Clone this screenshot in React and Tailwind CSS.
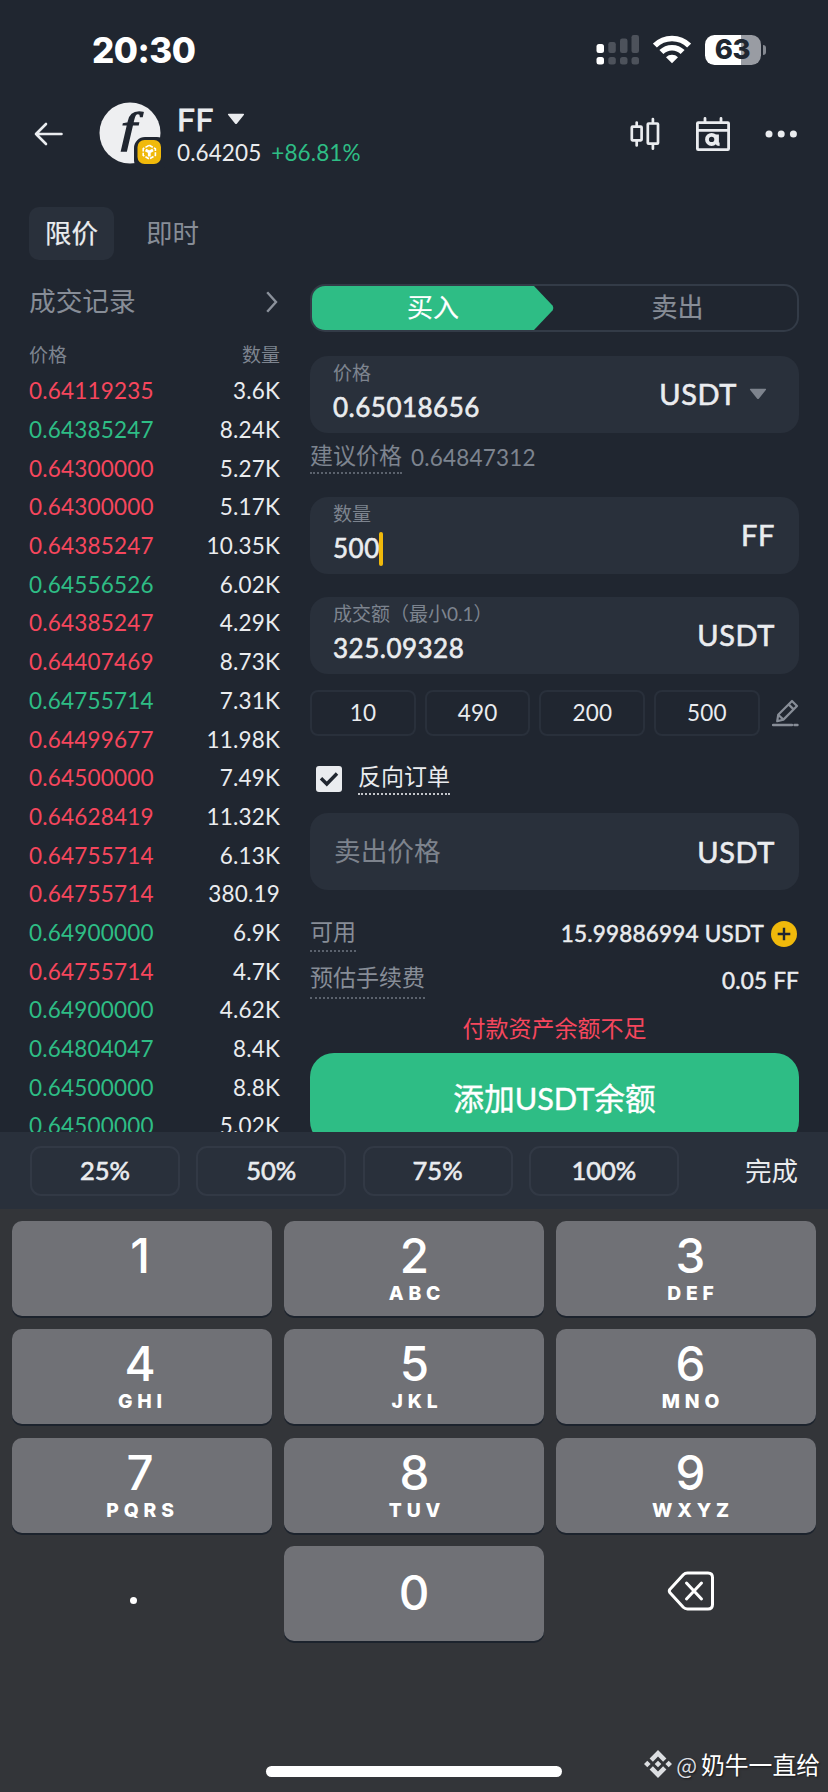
import React from "react";

const trades = [
  ["0.64119235", "3.6K", 0],
  ["0.64385247", "8.24K", 1],
  ["0.64300000", "5.27K", 0],
  ["0.64300000", "5.17K", 0],
  ["0.64385247", "10.35K", 0],
  ["0.64556526", "6.02K", 1],
  ["0.64385247", "4.29K", 0],
  ["0.64407469", "8.73K", 0],
  ["0.64755714", "7.31K", 1],
  ["0.64499677", "11.98K", 0],
  ["0.64500000", "7.49K", 0],
  ["0.64628419", "11.32K", 0],
  ["0.64755714", "6.13K", 0],
  ["0.64755714", "380.19", 0],
  ["0.64900000", "6.9K", 1],
  ["0.64755714", "4.7K", 0],
  ["0.64900000", "4.62K", 1],
  ["0.64804047", "8.4K", 1],
  ["0.64500000", "8.8K", 1],
  ["0.64500000", "5.02K", 1],
];

const keyRows = [
  [["1", ""], ["2", "ABC"], ["3", "DEF"]],
  [["4", "GHI"], ["5", "JKL"], ["6", "MNO"]],
  [["7", "PQRS"], ["8", "TUV"], ["9", "WXYZ"]],
];

// Horizontal nudge of the glyphs in each keypad column.
const columnShift = ["pr-[4px]", "pl-[1px]", "pl-[9px]"];

function StatusBar() {
  return (
    <div className="flex h-[100px] shrink-0 items-center justify-between pl-[92px] pr-[62px] font-['Inter',sans-serif]">
      <span className="text-[35px] font-extrabold leading-none tracking-[-0.5px] text-white">20:30</span>
      <div className="flex h-[30px] items-center">
        <svg width="44" height="30" viewBox="0 0 44 30">
          <g fill="#fff">
            <rect x="0.5" y="9" width="7.5" height="9" rx="2.5" />
            <rect x="0.5" y="22" width="7.5" height="7.5" rx="2.5" />
          </g>
          <g fill="#4d525b">
            <rect x="12.3" y="7" width="7.5" height="11" rx="2.2" />
            <rect x="12.3" y="22" width="7.5" height="7.5" rx="2.5" />
            <rect x="24" y="3.5" width="7.5" height="14.5" rx="2.2" />
            <rect x="24" y="22" width="7.5" height="7.5" rx="2.5" />
            <rect x="35.5" y="0" width="7.5" height="18" rx="2.2" />
            <rect x="35.5" y="22" width="7.5" height="7.5" rx="2.5" />
          </g>
        </svg>
        <svg className="ml-[13px]" width="38" height="30" viewBox="0 0 38 30">
          <g fill="none" stroke="#fff" strokeWidth="5.6">
            <path d="M1.9 10.6 A24.2 24.2 0 0 1 36.1 10.6" />
            <path d="M8.4 17.1 A15 15 0 0 1 29.6 17.1" />
          </g>
          <path d="M19 28.2 L13 22.2 A8.5 8.5 0 0 1 25 22.2 Z" fill="#fff" />
        </svg>
        <div className="ml-[14px] flex items-center">
          <div className="flex h-[30px] w-[56px] items-center justify-center rounded-[9.5px] bg-[linear-gradient(90deg,#fff_64%,#999ca3_64%)] text-[27.5px] font-extrabold leading-none tracking-[-0.5px] text-[#202630]">
            63
          </div>
          <div className="ml-[2px] h-[10px] w-[3.5px] rounded-r-full bg-[#858991]" />
        </div>
      </div>
    </div>
  );
}

function TokenLogo() {
  return (
    <svg width="66" height="66" viewBox="0 0 66 66">
      <circle cx="31" cy="31" r="30.5" fill="#eeeff1" />
      <text
        transform="translate(22 39.8) scale(1.3 1)"
        fill="#202630"
        stroke="#202630"
        strokeWidth="1.3"
        fontSize="43"
        fontStyle="italic"
        fontFamily="'Liberation Serif', serif"
      >
        f
      </text>
      <rect x="35" y="35" width="34" height="34" rx="11" fill="#202630" />
      <rect x="38.5" y="38" width="23.5" height="24" rx="7" fill="#f0b90b" />
      <g fill="none" stroke="#fff" strokeLinejoin="round">
        <path d="M50.3 43.2 L56.4 46.7 V53.4 L50.3 56.9 L44.2 53.4 V46.7 Z" strokeWidth="1.6" strokeDasharray="4 1.3" />
        <path d="M46.6 48 L50.3 50 L54 48 M50.3 50 V54.4" strokeWidth="2.8" />
      </g>
    </svg>
  );
}

function Header() {
  return (
    <div className="flex h-[68px] shrink-0 items-center pl-[34px] pr-[31px]">
      <svg width="30" height="24" viewBox="0 0 30 24" fill="none" stroke="#eaecef" strokeWidth="2.6" strokeLinecap="round" strokeLinejoin="round">
        <path d="M27.5 12 H2 M12 2 L2 12 L12 22" />
      </svg>
      <div className="ml-[35px] h-[66px] w-[66px] pt-px">
        <TokenLogo />
      </div>
      <div className="ml-[12px] flex flex-col">
        <div className="flex h-[36px] items-center">
          <span className="text-[31.5px] leading-[36px] tracking-[0.8px] text-[#eaecef] [-webkit-text-stroke:0.9px_#eaecef]">FF</span>
          <svg className="ml-[13px]" width="18" height="12" viewBox="0 0 18 12">
            <path d="M1.5 0.7 H16.5 Q17.6 1 16.8 2 L10 10.6 Q9 11.6 8 10.6 L1.2 2 Q0.4 1 1.5 0.7 Z" fill="#eaecef" />
          </svg>
        </div>
        <div className="flex h-[30px] items-center gap-[10px] pt-[2px] text-[22.5px] leading-[30px] tracking-[0.1px]">
          <span className="text-[#eaecef]">0.64205</span>
          <span className="text-[#2ebd85]">+86.81%</span>
        </div>
      </div>
      <div className="ml-auto flex items-center">
        <svg width="30" height="34" viewBox="0 0 30 34" fill="none" stroke="#eaecef" strokeWidth="2.7" strokeLinecap="round">
          <rect x="1.8" y="9.7" width="9.8" height="13.6" rx="0.8" />
          <path d="M6.7 5.5 V9 M6.7 24 V28.5" />
          <rect x="17.8" y="6.5" width="10.2" height="20.2" rx="0.8" />
          <path d="M22.9 2 V6 M22.9 27.5 V31.7" />
        </svg>
        <svg className="ml-[35px]" width="36" height="36" viewBox="0 0 36 36" fill="none" stroke="#eaecef" strokeWidth="2.8" strokeLinecap="round">
          <rect x="2.4" y="6.6" width="31.2" height="27" rx="0.8" />
          <path d="M2.4 14.4 H33.6 M10 2.4 V6 M26 2.4 V6" />
          <circle cx="16.6" cy="23.4" r="4.6" strokeWidth="3.8" />
          <path d="M22.2 18.4 V26.4 Q22.2 28.2 24.6 28.2" strokeWidth="3.4" strokeLinecap="butt" />
        </svg>
        <svg className="ml-[34px]" width="32" height="8" viewBox="0 0 32 8" fill="#eaecef">
          <circle cx="4" cy="4" r="3.5" />
          <circle cx="16.2" cy="4" r="3.5" />
          <circle cx="28.4" cy="4" r="3.5" />
        </svg>
      </div>
    </div>
  );
}

function TradeList() {
  return (
    <div className="flex w-[250px] shrink-0 flex-col">
      <div className="flex h-[36px] shrink-0 items-center justify-between text-[#848e9c]">
        <span className="-ml-px -mt-[2px] text-[26.7px] leading-[36px] text-[#878d97]">成交记录</span>
        <svg className="mr-[2px]" width="12" height="22" viewBox="0 0 12 22" fill="none" stroke="#8b919b" strokeWidth="2.4">
          <path d="M1.2 1.2 L10 11 L1.2 20.8" />
        </svg>
      </div>
      <div className="mt-[22px] flex h-[26px] shrink-0 items-center justify-between text-[19px] leading-[26px] text-[#7d848f]">
        <span className="-ml-px">价格</span>
        <span>数量</span>
      </div>
      <div className="mt-[4px] flex shrink-0 flex-col">
        {trades.map(([price, amount, up], i) => (
          <div key={i} className="-ml-px flex h-[38.7px] shrink-0 items-center justify-between text-[22.5px] leading-[30px] tracking-[0.2px]">
            <span className={up ? "text-[#2ebd85]" : "text-[#f6465d]"}>{price}</span>
            <span className="text-[#eaecef]">{amount}</span>
          </div>
        ))}
      </div>
    </div>
  );
}

function Field({ label, value, unit, caret, cursor }) {
  return (
    <div className="flex h-[77px] shrink-0 items-center justify-between rounded-[18px] bg-[#29303b] pl-[23px] pr-[24px]">
      <div className="flex h-[77px] flex-col">
        <span className="mt-[4px] h-[25px] text-[19px] leading-[25px] text-[#7d848f]">{label}</span>
        <span className="mt-[4px] flex h-[36px] items-center text-[26px] leading-[36px] tracking-[0.5px] text-[#eaecef] [-webkit-text-stroke:0.6px_#eaecef]">
          {value}
          {cursor && <i className="-ml-px mt-[2px] h-[34px] w-[4px] rounded-sm bg-[#f0b90b]" />}
        </span>
      </div>
      <div className="flex items-center pb-[2px]">
        <span className="text-[29px] leading-[36px] tracking-[0.6px] text-[#eaecef] [-webkit-text-stroke:0.6px_#eaecef]">{unit}</span>
        {caret && (
          <svg className="ml-[12px] mr-[8px]" width="18" height="12" viewBox="0 0 18 12">
            <path d="M1.5 0.7 H16.5 Q17.6 1 16.8 2 L10 10.6 Q9 11.6 8 10.6 L1.2 2 Q0.4 1 1.5 0.7 Z" fill="#7d838d" />
          </svg>
        )}
      </div>
    </div>
  );
}

function OrderForm() {
  return (
    <div className="ml-[30px] flex w-[489px] shrink-0 flex-col">
      <div className="flex h-[48px] shrink-0 overflow-hidden rounded-[15px] border-2 border-[#333b47] text-[26px] leading-[36px]">
        <div className="relative flex h-full w-[242px] items-center justify-center">
          <svg className="absolute inset-0" width="242" height="44" viewBox="0 0 242 44">
            <path d="M0 0 H222 L240.5 19.6 Q242 22 240.5 24.4 L222 44 H0 Z" fill="#2ebd85" />
          </svg>
          <span className="relative mb-[3px] text-white [-webkit-text-stroke:0.2px_#fff]">买入</span>
        </div>
        <div className="flex h-full flex-1 items-center justify-center pb-[3px] pl-[4px] text-[#878d97] [-webkit-text-stroke:0.2px_#878d97]">卖出</div>
      </div>
      <div className="h-[24px] shrink-0" />
      <Field label="价格" value="0.65018656" unit="USDT" caret />
      <div className="mt-[7px] flex h-[57px] shrink-0 items-start gap-[9px] text-[23px] leading-[31px] text-[#7d848f]">
        <span className="h-[34px] border-b-2 border-dotted border-[#5b626d]">建议价格</span>
        <span className="mt-[2px] text-[22.5px] tracking-[0.2px]">0.64847312</span>
      </div>
      <Field label="数量" value="500" unit="FF" cursor />
      <div className="h-[23px] shrink-0" />
      <Field label="成交额（最小0.1）" value="325.09328" unit="USDT" />
      <div className="mt-[16px] flex h-[46px] shrink-0 items-center gap-[8.9px]">
        {["10", "490", "200", "500"].map((v) => (
          <div key={v} className="flex h-[46px] w-[105.8px] items-center justify-center rounded-[8px] border-2 border-[#29303b] text-[22.5px] tracking-[0.2px] text-[#eaecef]">
            {v}
          </div>
        ))}
        <svg className="ml-[3px]" width="27" height="28" viewBox="0 0 27 28" fill="none" stroke="#878d97" strokeWidth="2.2" strokeLinejoin="round">
          <path d="M5.2 22.2 L6.2 15.8 L20 2 L25 7 L11.4 20.6 Z M16.6 5.4 L21.6 10.4 M6.2 15.8 L11.4 20.6" />
          <path d="M1 26 H20 M22.5 26 H25.5" strokeWidth="2.4" strokeLinecap="round" />
        </svg>
      </div>
      <div className="mt-[24px] flex h-[53px] shrink-0 items-start">
        <div className="ml-[6px] mt-[6px] flex h-[26px] w-[26px] items-center justify-center rounded-[3px] bg-[#eaecef]">
          <svg width="20" height="16" viewBox="0 0 20 16" fill="none" stroke="#202630" strokeWidth="3.4">
            <path d="M2 7.2 L7.8 13 L18 2.5" />
          </svg>
        </div>
        <span className="ml-[16px] h-[35px] border-b-2 border-dotted border-[#c3c6cb] text-[23px] leading-[32px] text-[#eaecef]">反向订单</span>
      </div>
      <div className="flex h-[77px] shrink-0 items-center justify-between rounded-[18px] bg-[#29303b] pl-[24px] pr-[24px]">
        <span className="text-[26.7px] text-[#7d838d]">卖出价格</span>
        <span className="text-[29px] tracking-[0.6px] text-[#eaecef] [-webkit-text-stroke:0.6px_#eaecef]">USDT</span>
      </div>
      <div className="mt-[26px] flex h-[46px] shrink-0 items-start justify-between text-[23px] leading-[30px]">
        <span className="h-[36px] border-b-2 border-dotted border-[#5b626d] text-[#878d97]">可用</span>
        <div className="mt-[3px] flex items-center">
          <span className="text-[22.5px] tracking-[0.2px] text-[#eaecef] [-webkit-text-stroke:0.5px_#eaecef]">15.99886994 USDT</span>
          <svg className="ml-[7px] mr-[2px]" width="26" height="26" viewBox="0 0 26 26">
            <circle cx="13" cy="13" r="13" fill="#f0b90b" />
            <path d="M6.7 13 H19.3 M13 6.7 V19.3" stroke="#202630" strokeWidth="2.4" />
          </svg>
        </div>
      </div>
      <div className="flex h-[49px] shrink-0 items-start justify-between text-[23px] leading-[31px]">
        <span className="h-[37px] border-b-2 border-dotted border-[#5b626d] text-[#878d97]">预估手续费</span>
        <span className="mt-[3px] text-[22.5px] tracking-[0.2px] text-[#eaecef] [-webkit-text-stroke:0.5px_#eaecef]">0.05 FF</span>
      </div>
      <div className="flex h-[42px] shrink-0 justify-center text-[23px] leading-[34px] text-[#f6465d]">付款资产余额不足</div>
      <div className="flex h-[92px] shrink-0 items-center justify-center rounded-[24px] bg-[#2ebd85] text-[30.7px] text-white [-webkit-text-stroke:0.4px_#fff]">
        添加USDT余额
      </div>
    </div>
  );
}

function Keypad() {
  return (
    <div className="flex flex-1 flex-col bg-[#333539] px-[12px] pt-[12px] font-['Inter',sans-serif] text-white">
      <div className="grid grid-cols-3 gap-x-[12px] gap-y-[13.3px]">
        {keyRows.map((row) =>
          row.map(([n, letters], col) => (
            <div key={n} className={`flex h-[95px] flex-col items-center rounded-[10px] bg-[#707176] shadow-[0_2px_0_#1c232d] ${columnShift[col]}`}>
              <span className="mt-[11px] text-[47.5px] font-medium leading-[48px]">{n}</span>
              <span className="mt-[2px] h-[22px] pl-[5px] text-[19.3px] font-extrabold leading-[22px] tracking-[4.8px]">{letters}</span>
            </div>
          ))
        )}
        <div className="flex h-[95px] items-center justify-center">
          <div className="mr-[17px] mt-[15px] h-[7px] w-[7px] rounded-full bg-white" />
        </div>
        <div className="flex h-[95px] items-center justify-center rounded-[10px] bg-[#707176] text-[47.5px] font-medium leading-[48px] shadow-[0_2px_0_#1c232d]">0</div>
        <div className="flex h-[95px] items-center justify-center">
          <svg className="ml-[10px] mt-[-5px]" width="48" height="40" viewBox="0 0 48 40" fill="none" stroke="#fff" strokeWidth="3" strokeLinecap="round" strokeLinejoin="round">
            <path d="M20.5 2 H41 Q45.5 2 45.5 6.5 V33.5 Q45.5 38 41 38 H20.5 Q18 38 16.3 36.3 L3 21.8 Q1.6 20 3 18.2 L16.3 3.7 Q18 2 20.5 2 Z" />
            <path d="M19.5 12 L34.5 28 M34.5 12 L19.5 28" />
          </svg>
        </div>
      </div>
      <div className="relative mt-[125px] flex h-[11px] justify-center">
        <div className="h-[11px] w-[296px] rounded-full bg-white" />
        <div className="absolute right-[-4px] top-[-19px] flex h-[34px] items-center font-['Noto_Sans_CJK_SC',sans-serif] [text-shadow:1px_1px_2px_#0008]">
          <svg width="28" height="28" viewBox="0 0 28 28" fill="#dcdee1">
            <path d="M14 0 L22.4 8.4 L19.1 11.7 L14 6.6 L8.9 11.7 L5.6 8.4 Z" />
            <path d="M14 28 L22.4 19.6 L19.1 16.3 L14 21.4 L8.9 16.3 L5.6 19.6 Z" />
            <path d="M3.3 10.7 L6.6 14 L3.3 17.3 L0 14 Z M24.7 10.7 L28 14 L24.7 17.3 L21.4 14 Z M14 10.7 L17.3 14 L14 17.3 L10.7 14 Z" />
          </svg>
          <span className="ml-[4px] text-[22px] leading-[34px] text-[#dcdee1]">@</span>
          <span className="ml-[4px] text-[23.8px] leading-[34px]">奶牛一直给</span>
        </div>
      </div>
    </div>
  );
}

export default function App() {
  return (
    <div className="flex h-[1792px] w-[828px] flex-col overflow-hidden bg-[#202630] font-['Lato','Noto_Sans_CJK_SC',sans-serif]">
      <StatusBar />
      <Header />
      <div className="mt-[39px] flex h-[53px] shrink-0 pl-[29px] text-[26.5px] leading-[53px]">
        <div className="w-[85px] rounded-[10px] bg-[#29303b] text-center text-[#eaecef] [-webkit-text-stroke:0.2px_#eaecef]">限价</div>
        <div className="ml-[32px] text-[#878d97]">即时</div>
      </div>
      <div className="flex h-[872px] shrink-0 overflow-hidden pl-[30px] pt-[24px]">
        <TradeList />
        <OrderForm />
      </div>
      <div className="flex h-[77px] shrink-0 items-center gap-[16.3px] bg-[#29303b] pl-[30px] pr-[30px] text-[#eaecef]">
        {["25%", "50%", "75%", "100%"].map((p) => (
          <div key={p} className="flex h-[50px] w-[150px] items-center justify-center rounded-[11px] border-2 border-[#323945] text-[25.5px] [-webkit-text-stroke:0.6px_#eaecef]">
            {p}
          </div>
        ))}
        <span className="ml-auto text-[26.5px] leading-[36px]">完成</span>
      </div>
      <Keypad />
    </div>
  );
}
